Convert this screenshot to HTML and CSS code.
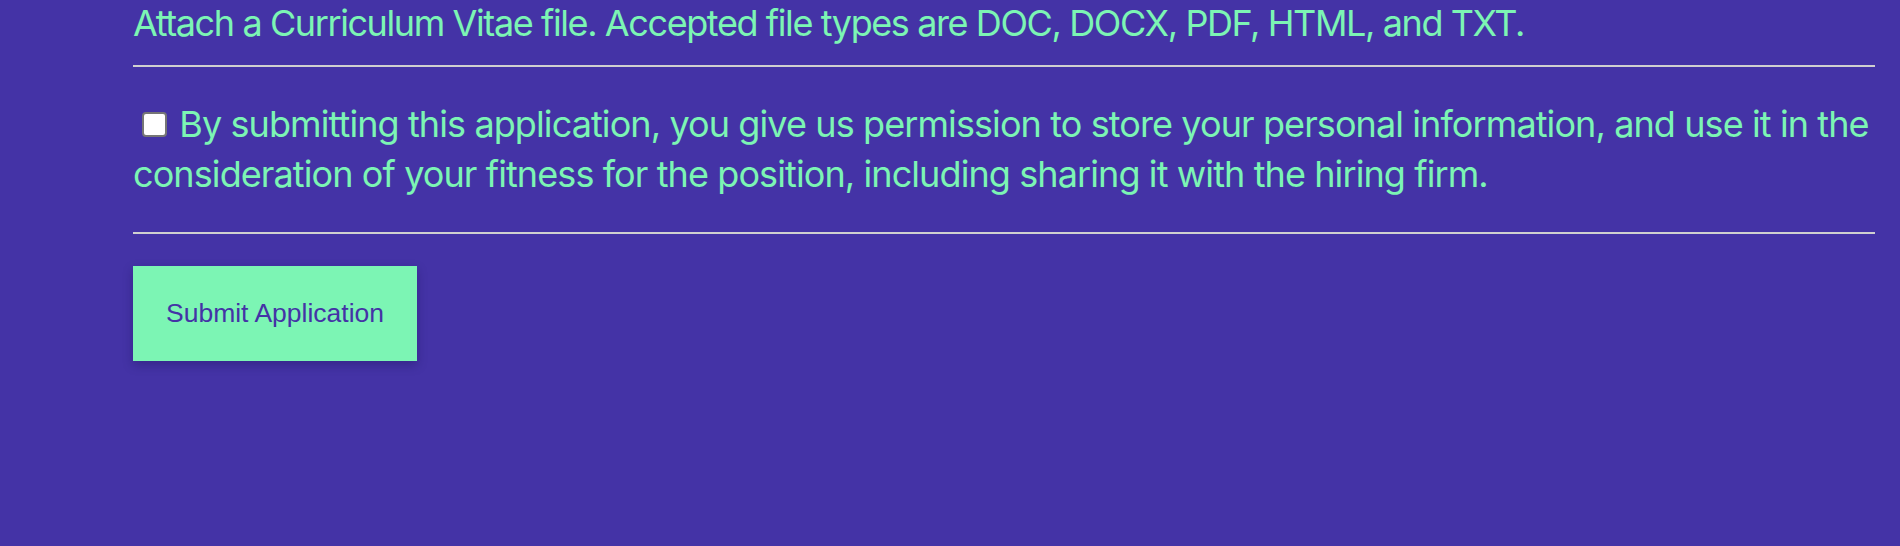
FILE: index.html
```html
<!DOCTYPE html>
<html lang="en">
<head>
<meta charset="utf-8">
<title>Application</title>
<link rel="stylesheet" href="styles.css">
</head>
<body>
<main class="form">
  <p class="hint">Attach a Curriculum Vitae file. Accepted file types are DOC, DOCX, PDF, HTML, and TXT.</p>
  <hr class="rule">
  <label class="consent"><input class="consent-box" type="checkbox"> By submitting this application, you give us permission to store your personal information, and use it in the consideration of your fitness for the position, including sharing it with the hiring firm.</label>
  <hr class="rule rule-bottom">
  <button class="submit" type="submit">Submit Application</button>
</main>
</body>
</html>
```

FILE: styles.css
```css
html, body {
  margin: 0;
  padding: 0;
  background: #4433a6;
}

body {
  height: 546px;
  overflow: hidden;
}

.form {
  display: flex;
  flex-direction: column;
  align-items: flex-start;
  width: 1742px;
  margin-left: 133px;
  margin-top: -2px;
  font-family: Inter, "Noto Sans", sans-serif;
  font-size: 36px;
  line-height: 50px;
  color: #7cf5b4;
}

.hint {
  margin: 0;
  letter-spacing: -1.4px;
}

.rule {
  align-self: stretch;
  height: 0;
  border: 0;
  border-top: 2px solid #d0d0d0;
  margin: 17px 0 32px;
}

.rule-bottom {
  margin: 33px 0 32px;
}

.consent {
  display: block;
  letter-spacing: -0.9px;
}

.consent-box {
  -webkit-appearance: none;
  appearance: none;
  box-sizing: border-box;
  width: 25px;
  height: 25px;
  margin: 0 3px 0 9px;
  vertical-align: baseline;
  background: #ffffff;
  border: 2px solid #767676;
  border-radius: 4px;
}

.submit {
  font-family: "Liberation Sans", Arial, sans-serif;
  font-size: 26.5px;
  line-height: 29px;
  letter-spacing: 0;
  color: #4433a6;
  background: #7cf5b4;
  border: 0;
  padding: 33px 33px;
  box-shadow: 0 4px 10px rgba(20, 10, 70, 0.3);
  cursor: pointer;
}
```
